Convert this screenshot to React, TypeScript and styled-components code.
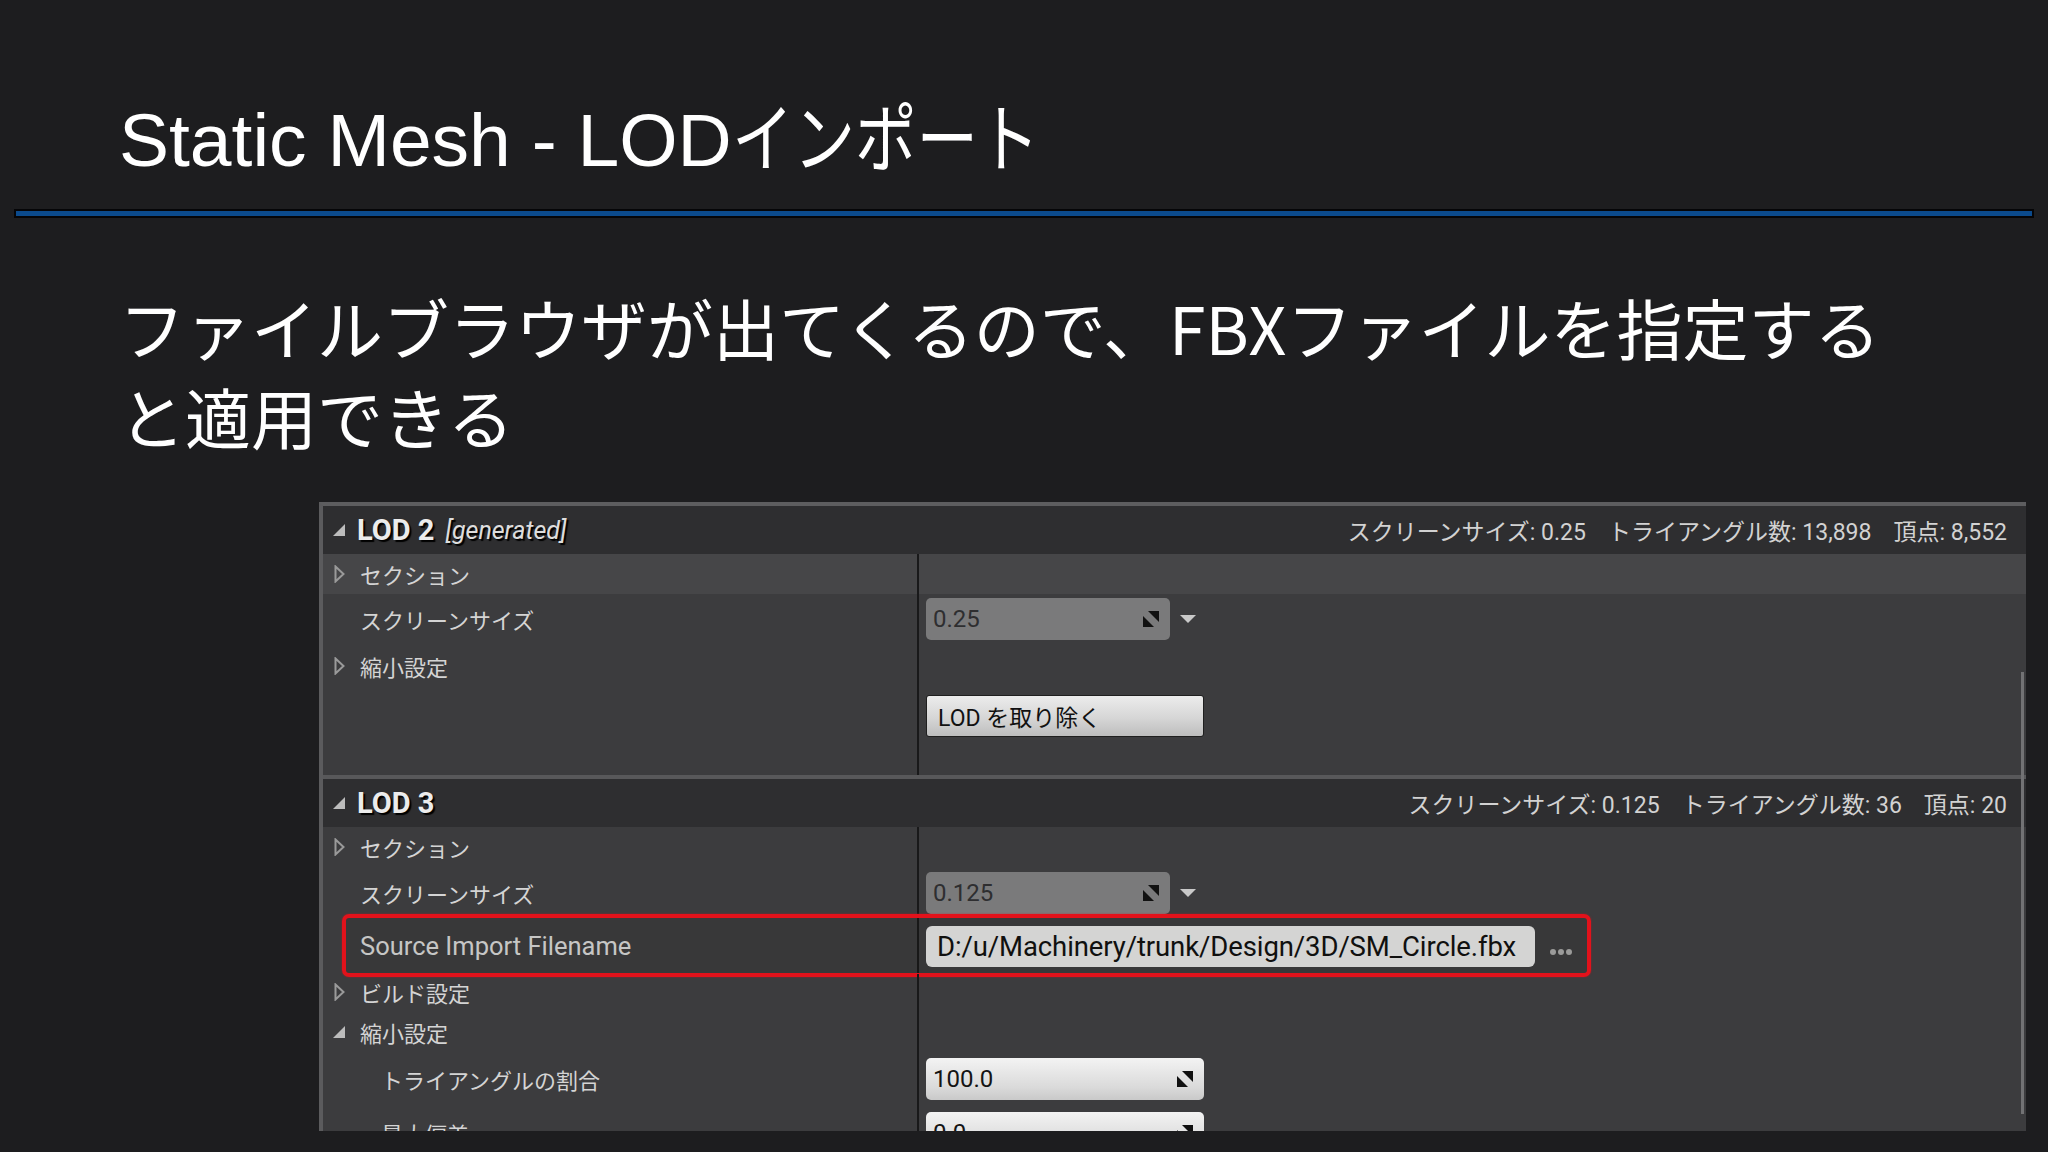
import React from 'react'
import styled, { createGlobalStyle } from 'styled-components'

const GlobalStyle = createGlobalStyle`
  html, body {
    margin: 0;
    padding: 0;
    background: #1d1d1f;
  }
  * { box-sizing: border-box; }
`

const UI_FONT = `Roboto, "Noto Sans CJK JP", sans-serif`

const Slide = styled.div`
  width: 2048px;
  height: 1152px;
  overflow: hidden;
  background: #1d1d1f;
  display: flex;
  flex-direction: column;
`

const Title = styled.h1`
  margin: 100px 0 0 119px;
  height: 80px;
  font-family: "Liberation Sans", "Noto Sans CJK JP", sans-serif;
  font-weight: 400;
  font-size: 75px;
  line-height: 80px;
  color: #ffffff;
  white-space: nowrap;
`

// the katakana in the slide title is set narrower than the Latin part
const Condensed = styled.span`
  display: inline-block;
  transform: scaleX(0.82);
  transform-origin: left center;
`

const Rule = styled.div`
  margin: 29px 14px 0;
  height: 9px;
  background: #0b4a8c;
  border: 2px solid #050507;
`

const Lead = styled.p`
  margin: 64px 0 0 119px;
  font-family: "Noto Sans CJK JP", sans-serif;
  font-size: 66px;
  line-height: 89px;
  color: #ffffff;
`

const Panel = styled.div`
  position: relative;
  flex-shrink: 0;
  margin: 42px 0 0 319px;
  width: 1707px;
  height: 629px;
  overflow: hidden;
  background: #3c3c3e;
  border-top: 4px solid #5d5d5f;
  border-left: 4px solid #5b5b5d;
  font-family: ${UI_FONT};
`

const Scrollbar = styled.div`
  position: absolute;
  right: 2px;
  top: 166px;
  width: 3px;
  height: 442px;
  background: #727274;
`

const Section = styled.section<{ $sep?: boolean }>`
  border-top: ${(p) => (p.$sep ? '4px solid #58585a' : 'none')};
`

const Header = styled.div`
  height: 48px;
  display: flex;
  align-items: center;
  padding: 0 19px 0 9px;
  background: #2e2e30;
`

const HeaderTitle = styled.div`
  display: flex;
  align-items: center;
  gap: 11px;
  margin-left: 11px;
  color: #ececec;
  text-shadow: 2px 2px 1px #000;
`

const LodName = styled.span`
  font-weight: 700;
  font-size: 29px;
`

const LodTag = styled.span`
  font-style: italic;
  font-size: 25px;
  color: #dedede;
`

const Stats = styled.div`
  margin-left: auto;
  display: flex;
  gap: 22px;
  font-size: 23px;
  color: #d2d2d2;
`

const Row = styled.div<{ $h: number; $hl?: boolean }>`
  position: relative;
  display: grid;
  grid-template-columns: 594px 2px 1fr;
  height: ${(p) => p.$h}px;
  background: ${(p) => (p.$hl ? '#464648' : 'transparent')};
`

const NameCell = styled.div<{ $indent?: number }>`
  display: flex;
  align-items: center;
  gap: 14px;
  padding-left: ${(p) => 9 + (p.$indent || 0)}px;
  font-size: 22px;
  color: #d4d4d4;
  white-space: nowrap;
`

const LatinName = styled.span`
  font-size: 25.5px;
`

const ArrowSlot = styled.span`
  width: 14px;
  height: 18px;
  display: flex;
  align-items: center;
  justify-content: center;
`

const Divider = styled.div`
  background: #19191a;
`

const ValueCell = styled.div`
  display: flex;
  align-items: center;
  padding-left: 7px;
`

const SpinBox = styled.div<{ $light?: boolean; $w: number }>`
  width: ${(p) => p.$w}px;
  height: 42px;
  display: flex;
  align-items: center;
  justify-content: space-between;
  padding: 0 10px 0 7px;
  border-radius: 5px;
  font-size: 24px;
  color: ${(p) => (p.$light ? '#141414' : '#2e2e30')};
  background: ${(p) =>
    p.$light ? 'linear-gradient(#f3f3f3, #dadada 70%, #c9c9c9)' : '#7a7a7b'};
`

const DropArrow = styled.span`
  margin-left: 10px;
  width: 0;
  height: 0;
  border-left: 8px solid transparent;
  border-right: 8px solid transparent;
  border-top: 8px solid #c9c9c9;
`

const Button = styled.div`
  width: 278px;
  height: 42px;
  display: flex;
  align-items: center;
  padding-left: 11px;
  border: 1px solid #1f1f1f;
  border-radius: 3px;
  background: linear-gradient(#ececec, #d6d6d6 55%, #bdbdbd);
  font-size: 23px;
  color: #111;
`

const PathField = styled.div`
  width: 609px;
  height: 41px;
  display: flex;
  align-items: center;
  padding-left: 11px;
  border-radius: 6px;
  background: #e3e3e3;
  font-size: 27.5px;
  letter-spacing: -0.1px;
  color: #111;
  white-space: nowrap;
`

const Dots = styled.span`
  display: flex;
  gap: 2px;
  margin: 12px 0 0 15px;
  span {
    width: 6px;
    height: 6px;
    border-radius: 50%;
    background: #a6a6a6;
  }
`

const Highlight = styled.div`
  position: absolute;
  left: 19px;
  top: -4px;
  width: 1249px;
  height: 63px;
  border: 4px solid #e2121b;
  border-radius: 7px;
  background: rgba(20, 12, 0, 0.07);
  box-shadow: 0 0 2px rgba(226, 18, 27, 0.6);
  pointer-events: none;
`

const Expander = ({ open }: { open?: boolean }) =>
  open ? (
    <svg width="14" height="14" viewBox="0 0 14 14">
      <polygon points="13,1 13,13 1,13" fill="#bcbcbc" />
    </svg>
  ) : (
    <svg width="11" height="18" viewBox="0 0 11 18">
      <polygon points="1.5,1.5 9.5,9 1.5,16.5" fill="none" stroke="#9a9a9a" strokeWidth="2" />
    </svg>
  )

const SpinIcon = () => (
  <svg width="18" height="18" viewBox="0 0 18 18">
    <polygon points="6,1 17,1 17,12" fill="#111" />
    <polygon points="1,6 12,17 1,17" fill="#111" />
  </svg>
)

type TStat = { label: string; value: string }

const LodHeader = ({ name, tag, stats }: { name: string; tag?: string; stats: TStat[] }) => (
  <Header>
    <Expander open />
    <HeaderTitle>
      <LodName>{name}</LodName>
      {tag && <LodTag>{tag}</LodTag>}
    </HeaderTitle>
    <Stats>
      {stats.map((s) => (
        <span key={s.label}>
          {s.label}: {s.value}
        </span>
      ))}
    </Stats>
  </Header>
)

const Prop = ({
  h,
  label,
  arrow,
  indent,
  hl,
  children,
}: {
  h: number
  label?: string
  arrow?: 'open' | 'closed'
  indent?: number
  hl?: boolean
  children?: React.ReactNode
}) => (
  <Row $h={h} $hl={hl}>
    <NameCell $indent={indent}>
      <ArrowSlot>{arrow && <Expander open={arrow === 'open'} />}</ArrowSlot>
      {label}
    </NameCell>
    <Divider />
    <ValueCell>{children}</ValueCell>
  </Row>
)

const App: React.FC = () => {
  return (
    <Slide>
      <GlobalStyle />
      <Title>
        Static Mesh - LOD<Condensed>インポート</Condensed>
      </Title>
      <Rule />
      <Lead>
        ファイルブラウザが出てくるので、FBXファイルを指定する
        <br />
        と適用できる
      </Lead>

      <Panel>
        <Section>
          <LodHeader
            name="LOD 2"
            tag="[generated]"
            stats={[
              { label: 'スクリーンサイズ', value: '0.25' },
              { label: 'トライアングル数', value: '13,898' },
              { label: '頂点', value: '8,552' },
            ]}
          />
          <Prop h={40} hl arrow="closed" label="セクション" />
          <Prop h={49} label="スクリーンサイズ">
            <SpinBox $w={244}>
              0.25
              <SpinIcon />
            </SpinBox>
            <DropArrow />
          </Prop>
          <Prop h={46} arrow="closed" label="縮小設定" />
          <Prop h={54}>
            <Button>LOD を取り除く</Button>
          </Prop>
          <Prop h={32} />
        </Section>

        <Section $sep>
          <LodHeader
            name="LOD 3"
            stats={[
              { label: 'スクリーンサイズ', value: '0.125' },
              { label: 'トライアングル数', value: '36' },
              { label: '頂点', value: '20' },
            ]}
          />
          <Prop h={40} arrow="closed" label="セクション" />
          <Prop h={51} label="スクリーンサイズ">
            <SpinBox $w={244}>
              0.125
              <SpinIcon />
            </SpinBox>
            <DropArrow />
          </Prop>
          <Row $h={56}>
            <Highlight />
            <NameCell>
              <ArrowSlot />
              <LatinName>Source Import Filename</LatinName>
            </NameCell>
            <Divider />
            <ValueCell>
              <PathField>D:/u/Machinery/trunk/Design/3D/SM_Circle.fbx</PathField>
              <Dots>
                <span />
                <span />
                <span />
              </Dots>
            </ValueCell>
          </Row>
          <Prop h={36} arrow="closed" label="ビルド設定" />
          <Prop h={44} arrow="open" label="縮小設定" />
          <Prop h={50} indent={21} label="トライアングルの割合">
            <SpinBox $light $w={278}>
              100.0
              <SpinIcon />
            </SpinBox>
          </Prop>
          <Prop h={58} indent={21} label="最大偏差">
            <SpinBox $light $w={278}>
              0.0
              <SpinIcon />
            </SpinBox>
          </Prop>
        </Section>
        <Scrollbar />
      </Panel>
    </Slide>
  )
}

export default App
